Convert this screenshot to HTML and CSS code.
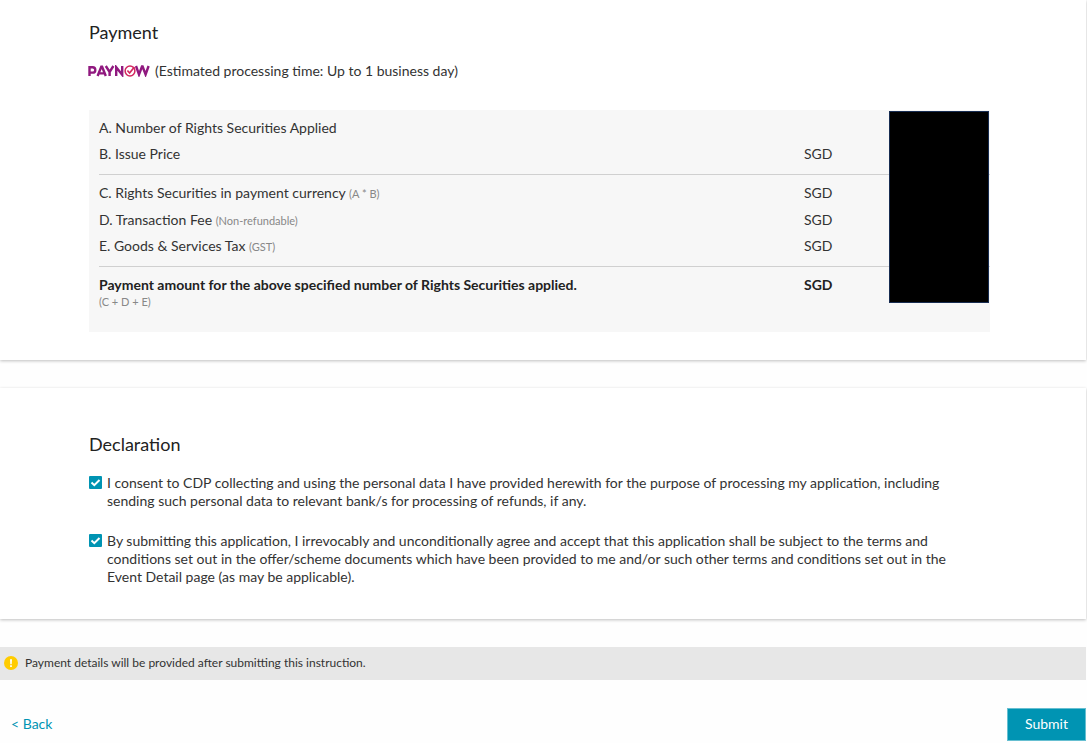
FILE: index.html
```html
<!DOCTYPE html>
<html lang="en">
<head>
<meta charset="utf-8">
<meta name="viewport" content="width=device-width, initial-scale=1">
<title>Payment and Declaration</title>
<link rel="stylesheet" href="styles.css">
</head>
<body>
<form class="page">
  <section class="card payment">
    <h2 class="card-title">Payment</h2>
    <p class="method">
      <svg class="paynow" viewBox="0 0 62 12" role="img" aria-label="PayNow">
        <g fill="none" stroke="#90197f" stroke-width="2.4">
          <path d="M1.5 11V2.2H4.600a2.600 2.600 0 0 1 0 5.400H1.500"/>
          <path d="M9.600 11 13.300 1.800h.8L17.800 11M11 8.400h5.600"/>
          <path d="M17.800 1 21.600 7 25.400 1M21.600 6.500V11"/>
          <path d="M28.200 11V2.200l6 7.600V1"/>
          <path d="M48 1l3 8.500 3-8h.6l3 8L60.600 1"/>
        </g>
        <circle cx="42" cy="6" r="4.900" fill="none" stroke="#d3265f" stroke-width="1.500"/>
        <path d="M39.400 5.500 41.600 8 46.400 2" fill="none" stroke="#d3265f" stroke-width="1.700"/>
      </svg>
      <span>(Estimated processing time: Up to 1 business day)</span>
    </p>
    <div class="summary">
      <table class="amounts">
        <tbody class="inputs">
          <tr><th scope="row">A. Number of Rights Securities Applied</th><td></td></tr>
          <tr><th scope="row">B. Issue Price</th><td>SGD</td></tr>
        </tbody>
        <tbody>
          <tr><th scope="row">C. Rights Securities in payment currency <small>(A * B)</small></th><td>SGD</td></tr>
          <tr><th scope="row">D. Transaction Fee <small>(Non-refundable)</small></th><td>SGD</td></tr>
          <tr><th scope="row">E. Goods &amp; Services Tax <small>(GST)</small></th><td>SGD</td></tr>
        </tbody>
        <tbody class="total">
          <tr><th scope="row">Payment amount for the above specified number of Rights Securities applied.</th><td>SGD</td></tr>
        </tbody>
      </table>
      <p class="formula">(C + D + E)</p>
      <div class="redaction"></div>
    </div>
  </section>

  <section class="card declaration">
    <h2 class="card-title">Declaration</h2>
    <div class="consents">
      <div class="consent">
        <input class="check" type="checkbox" id="consent-data" checked>
        <label for="consent-data">I consent to CDP collecting and using the personal data I have provided herewith for the purpose of processing my application, including sending such personal data to relevant bank/s for processing of refunds, if any.</label>
      </div>
      <div class="consent">
        <input class="check" type="checkbox" id="consent-terms" checked>
        <label for="consent-terms">By submitting this application, I irrevocably and unconditionally agree and accept that this application shall be subject to the terms and conditions set out in the offer/scheme documents which have been provided to me and/or such other terms and conditions set out in the Event Detail page (as may be applicable).</label>
      </div>
    </div>
  </section>

  <div class="notice">
    <svg class="notice-icon" viewBox="0 0 14 14" aria-hidden="true">
      <circle cx="7" cy="7" r="7" fill="#fc0"/>
      <path d="M6 3.200h2l-.3 5H6.300zM6.100 9.200h1.800v1.700H6.100z" fill="#fff"/>
    </svg>
    <span>Payment details will be provided after submitting this instruction.</span>
  </div>

  <div class="actions">
    <a class="back" href="#">&lt; Back</a>
    <button class="submit" type="submit">Submit</button>
  </div>
</form>
</body>
</html>
```
FILE: styles.css
```css
* {
  box-sizing: border-box;
}

body {
  margin: 0;
  background: #fefefe;
  color: #333;
  font-family: Lato, "Liberation Sans", sans-serif;
  font-size: 14px;
  line-height: 18px;
}

.page {
  margin-right: 1px;
}

.card {
  margin-bottom: 28px;
  background: #fff;
  box-shadow: 0 1px 3px rgba(0, 0, 0, 0.25);
}

.payment {
  padding: 22px 96px 28px 89px;
}

.declaration {
  padding: 46px 96px 33px 89px;
}

.card-title {
  margin: 0 0 20px;
  color: #222;
  font-size: 18px;
  font-weight: 400;
  line-height: 20px;
}

.method {
  display: flex;
  align-items: center;
  gap: 5px;
  margin: 0 0 30px;
}

.paynow {
  width: 62px;
  height: 12px;
  margin-left: -1px;
}

.summary {
  position: relative;
  padding: 0 0 22px 10px;
  background: #f7f7f7;
}

.amounts {
  width: 100%;
  border-collapse: collapse;
}

.amounts th,
.amounts td {
  height: 27px;
  padding: 0;
  font-weight: 400;
  text-align: left;
}

.amounts td {
  width: 186px;
}

.amounts tbody + tbody {
  border-top: 1px solid #d0d0d0;
}

.amounts tr:first-child > * {
  height: 32px;
  padding-top: 5px;
}

.amounts .inputs tr:first-child > * {
  height: 31px;
  padding-top: 4px;
}

.amounts tr:last-child > * {
  height: 33px;
  padding-bottom: 6px;
}

.amounts .total tr > * {
  height: 27px;
  padding: 9px 0 0;
  color: #222;
  font-weight: 700;
}

.amounts small,
.formula {
  color: #888;
  font-size: 11px;
}

.amounts small {
  line-height: 1;
}

.formula {
  margin: 0;
  line-height: 16px;
}

.redaction {
  position: absolute;
  top: 1px;
  right: 1px;
  width: 100px;
  height: 192px;
  border: 1px solid #172c51;
  background: #000;
}

.consents {
  display: grid;
  gap: 22px;
}

.consent {
  display: flex;
  align-items: flex-start;
  gap: 5px;
  padding-right: 24px;
}

.check {
  flex: none;
  width: 13px;
  height: 13px;
  margin: 2px 0 0;
  border-radius: 1px;
  appearance: none;
  background: #0094b3;
}

.check:checked {
  background-image: url("data:image/svg+xml,%3Csvg xmlns='http://www.w3.org/2000/svg' viewBox='0 0 13 13'%3E%3Cpath d='M2.500 6.500 5.300 9.200 10.500 4' fill='none' stroke='white' stroke-width='2'/%3E%3C/svg%3E");
}

.notice {
  display: flex;
  align-items: center;
  gap: 7px;
  height: 33px;
  padding: 0 4px;
  background: #e7e7e7;
  font-size: 12px;
}

.notice-icon {
  width: 14px;
  height: 14px;
}

.actions {
  display: flex;
  align-items: center;
  justify-content: space-between;
  margin-top: 28px;
  padding-left: 11px;
}

.back {
  color: #0094b3;
  text-decoration: none;
}

.submit {
  height: 33px;
  padding: 0 17px;
  border: 1px solid #66bfd1;
  background: #0094b3;
  color: #fff;
  font: inherit;
}
```
